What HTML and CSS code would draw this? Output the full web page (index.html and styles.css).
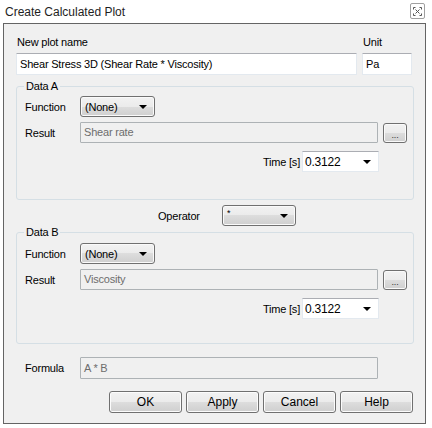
FILE: index.html
```html
<!DOCTYPE html>
<html lang="en">
<head>
    <meta charset="UTF-8">
    <title>Create Calculated Plot</title>
    <link rel="stylesheet" href="styles.css">
</head>
<body>
    <div class="titlebar">
        <span class="title">Create Calculated Plot</span>
        <span class="close">
            <svg width="9" height="9" viewBox="0 0 9 9">
                <path d="M0.5 2.5V0.5H2.5M6.5 0.5H8.5V2.5M8.5 6.5V8.5H6.5M2.5 8.5H0.5V6.5M2.5 2.5L6.5 6.5M6.5 2.5L2.5 6.5" fill="none" stroke="#555" stroke-width="1"/>
            </svg>
        </span>
    </div>

    <div class="dialog">
        <div class="name-grid">
            <label>New plot name</label>
            <label>Unit</label>
            <div class="edit">Shear Stress 3D (Shear Rate * Viscosity)</div>
            <div class="edit">Pa</div>
        </div>

        <div class="group">
            <span class="legend">Data A</span>
            <div class="row">
                <span class="lbl">Function</span>
                <div class="combo fn">(None)<i class="arrow"></i></div>
            </div>
            <div class="row">
                <span class="lbl">Result</span>
                <div class="edit disabled wide">Shear rate</div>
                <div class="browse">...</div>
            </div>
            <div class="row time-row">
                <span class="time-lbl">Time [s]</span>
                <div class="edit-combo">0.3122<i class="arrow"></i></div>
            </div>
        </div>

        <div class="operator-row">
            <span class="op-lbl">Operator</span>
            <div class="combo op">*<i class="arrow"></i></div>
        </div>

        <div class="group group-b">
            <span class="legend">Data B</span>
            <div class="row">
                <span class="lbl">Function</span>
                <div class="combo fn">(None)<i class="arrow"></i></div>
            </div>
            <div class="row">
                <span class="lbl">Result</span>
                <div class="edit disabled wide">Viscosity</div>
                <div class="browse">...</div>
            </div>
            <div class="row time-row">
                <span class="time-lbl">Time [s]</span>
                <div class="edit-combo">0.3122<i class="arrow"></i></div>
            </div>
        </div>

        <div class="row formula-row">
            <span class="lbl">Formula</span>
            <div class="edit disabled wide">A * B</div>
        </div>

        <div class="buttons">
            <div class="btn">OK</div>
            <div class="btn">Apply</div>
            <div class="btn">Cancel</div>
            <div class="btn">Help</div>
        </div>
    </div>
</body>
</html>
```

FILE: styles.css
```css
body {
    margin: 0;
    background: #fff;
    font-family: 'Liberation Sans', Arial, sans-serif;
    font-size: 11px;
    letter-spacing: -0.2px;
    color: #000;
}
.titlebar {
    height: 23px;
    display: flex;
    align-items: center;
    justify-content: space-between;
    padding: 0 7px 0 5px;
}
.title {
    font-size: 12px;
    letter-spacing: 0;
    color: #1e1e1e;
}
.close {
    width: 13px;
    height: 14px;
    border: 1px solid #a0a0a0;
    border-radius: 2px;
    display: flex;
    align-items: center;
    justify-content: center;
    margin-top: -1px;
}
.dialog {
    box-sizing: border-box;
    margin-left: 3px;
    width: 423px;
    height: 401px;
    border: 1px solid #646464;
    background: #f0f0f0;
    padding: 11px 13px 0 12px;
}
.name-grid {
    display: grid;
    grid-template-columns: 341px 50px;
    column-gap: 5px;
    row-gap: 4px;
}
.name-grid label {
    line-height: 14px;
    padding-left: 1px;
}
.edit {
    box-sizing: border-box;
    height: 22px;
    line-height: 20px;
    padding-left: 3px;
    background: #fff;
    border: 1px solid #e3e9ef;
    border-top-color: #abadb3;
    border-radius: 1px;
    white-space: nowrap;
    overflow: hidden;
}
.edit.disabled {
    height: 21px;
    line-height: 19px;
    background: #f0f0f0;
    border-color: #adb2b5;
    color: #6d6d6d;
}
.formula-row .edit.disabled {
    height: 22px;
    line-height: 20px;
}
.wide {
    width: 298px;
}
.group {
    position: relative;
    box-sizing: border-box;
    width: 398px;
    margin-top: 11px;
    border: 1px solid #d5dfe5;
    border-radius: 3px;
    padding: 9px 5px 27px 8px;
}
.group-b {
    margin-top: 6px;
    padding-top: 10px;
    padding-bottom: 24px;
}
.legend {
    position: absolute;
    top: -8px;
    left: 7px;
    line-height: 14px;
    padding: 0 2px;
    background: #f0f0f0;
}
.row {
    display: flex;
    align-items: center;
    margin-bottom: 5px;
}
.row:last-child {
    margin-bottom: 0;
}
.lbl {
    width: 55px;
    flex-shrink: 0;
}
.combo {
    box-sizing: border-box;
    height: 21px;
    display: flex;
    align-items: center;
    padding-left: 4px;
    border: 1px solid #707070;
    border-radius: 3px;
    background: linear-gradient(#f2f2f2, #ebebeb 50%, #dddddd 50%, #cfcfcf);
    box-shadow: inset 0 0 0 1px #fafafa;
}
.fn {
    width: 75px;
}
.op {
    width: 74px;
    align-items: flex-start;
    padding-top: 2px;
    font-size: 9px;
}
.arrow {
    margin-left: auto;
    margin-right: 7px;
    width: 0;
    height: 0;
    border-left: 4px solid transparent;
    border-right: 4px solid transparent;
    border-top: 4px solid #000;
}
.op .arrow {
    margin-top: 6px;
}
.browse {
    box-sizing: border-box;
    width: 24px;
    height: 20px;
    margin-left: 5px;
    border: 1px solid #707070;
    border-radius: 3px;
    background: linear-gradient(#f2f2f2, #ebebeb 50%, #dddddd 50%, #cfcfcf);
    box-shadow: inset 0 0 0 1px #fafafa;
    text-align: center;
    line-height: 22px;
    font-size: 9px;
    color: #333;
}
.time-row {
    justify-content: flex-end;
    padding-right: 29px;
    margin-top: 8px;
}
.time-lbl {
    margin-right: 2px;
}
.edit-combo {
    box-sizing: border-box;
    width: 77px;
    height: 21px;
    display: flex;
    align-items: center;
    padding-left: 2px;
    background: #fff;
    border: 1px solid #e3e9ef;
    border-top-color: #abadb3;
    font-size: 12px;
}
.operator-row {
    display: flex;
    align-items: center;
    margin-top: 5px;
    padding-left: 142px;
}
.op-lbl {
    width: 64px;
}
.formula-row {
    margin-top: 13px;
    padding-left: 9px;
}
.buttons {
    display: flex;
    justify-content: flex-end;
    gap: 4px;
    margin-top: 12px;
    margin-right: -1px;
}
.btn {
    box-sizing: border-box;
    width: 73px;
    height: 22px;
    line-height: 20px;
    text-align: center;
    border: 1px solid #707070;
    border-radius: 3px;
    background: linear-gradient(#f2f2f2, #ebebeb 50%, #dddddd 50%, #cfcfcf);
    box-shadow: inset 0 0 0 1px #fcfcfc;
    font-size: 12px;
    letter-spacing: 0;
}
```
